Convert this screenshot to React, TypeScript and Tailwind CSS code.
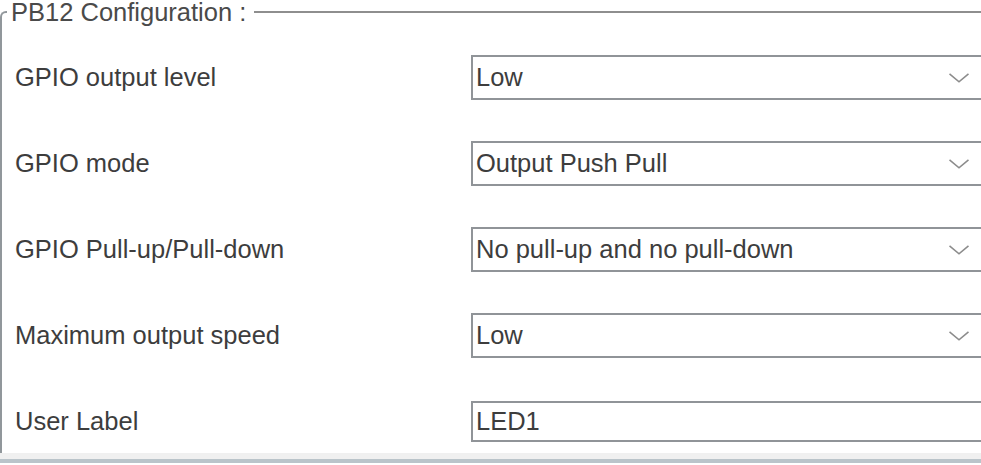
const rows = [
  { label: "GPIO output level", value: "Low", select: true },
  { label: "GPIO mode", value: "Output Push Pull", select: true },
  { label: "GPIO Pull-up/Pull-down", value: "No pull-up and no pull-down", select: true },
  { label: "Maximum output speed", value: "Low", select: true },
  { label: "User Label", value: "LED1", select: false },
];

function Chevron() {
  return (
    <svg width="20" height="10" viewBox="0 0 20 10" fill="none">
      <polyline points="0.5,0.8 10,8.8 19.5,0.8" stroke="#8c8c8c" strokeWidth="1.6" />
    </svg>
  );
}

export default function App() {
  return (
    <div className="w-[981px] h-[465px] bg-white overflow-hidden flex flex-col font-['Liberation_Sans',Arial,sans-serif] text-[25.5px] text-[#3d3d3d]">
      <div className="h-[453px] flex flex-col">
        {/* legend row */}
        <div className="h-[24px] flex items-center shrink-0">
          <div className="w-[7px] h-[13px] self-end border-l-2 border-t-2 border-[#91979b] rounded-tl-[6px]" />
          <span className="ml-[4px] leading-[24px] text-[#4a4a4a] whitespace-nowrap">PB12 Configuration :</span>
          <div className="flex-1 h-[2px] bg-[#8e8e8e] ml-[8px]" />
        </div>

        <div className="flex-1 border-l-2 border-[#91979b] pl-[13px] pt-[31px] flex flex-col gap-[41px] overflow-hidden">
          {rows.map((r) => (
            <div key={r.label} className="h-[45px] flex items-center shrink-0">
              <div className="w-[456px] shrink-0 whitespace-nowrap leading-none">{r.label}</div>
              <div
                className={`w-[530px] shrink-0 border-2 border-[#909498] bg-white flex items-center justify-between pl-[3px] pr-[30px] ${
                  r.select ? "h-[45px]" : "h-[41px]"
                }`}
              >
                <span className="leading-none whitespace-nowrap">{r.value}</span>
                {r.select && <Chevron />}
              </div>
            </div>
          ))}
        </div>
      </div>
      <div className="h-[6px] bg-[#f0f0f0] shrink-0" />
      <div className="h-[4px] bg-[#bac4ca] shrink-0" />
      <div className="flex-1 bg-white" />
    </div>
  );
}
